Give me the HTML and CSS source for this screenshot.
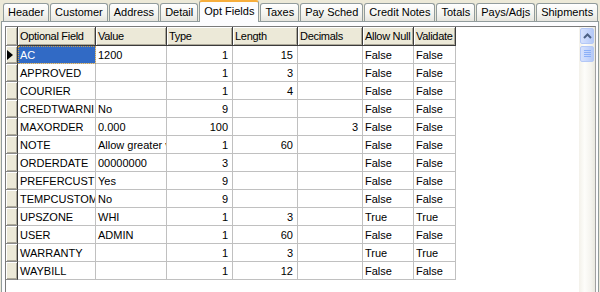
FILE: index.html
```html
<!DOCTYPE html>
<html lang="en">

<head>
    <meta charset="UTF-8">
    <title>Order Entry - Opt Fields</title>
    <link rel="stylesheet" href="styles.css">
</head>

<body>
    <div class="window">
        <div class="tabs">
            <div class="tab">Header</div>
            <div class="tab">Customer</div>
            <div class="tab">Address</div>
            <div class="tab">Detail</div>
            <div class="tab active">Opt Fields</div>
            <div class="tab">Taxes</div>
            <div class="tab">Pay Sched</div>
            <div class="tab">Credit Notes</div>
            <div class="tab">Totals</div>
            <div class="tab">Pays/Adjs</div>
            <div class="tab">Shipments</div>
        </div>
        <div class="panel">
            <div class="grid">
                <div class="grid-body">
                    <table class="data">
                        <colgroup>
                            <col class="c-ind">
                            <col class="c-field">
                            <col class="c-value">
                            <col class="c-type">
                            <col class="c-len">
                            <col class="c-dec">
                            <col class="c-null">
                            <col class="c-valid">
                        </colgroup>
                        <thead>
                            <tr>
                                <th class="ind"></th>
                                <th>Optional Field</th>
                                <th>Value</th>
                                <th>Type</th>
                                <th>Length</th>
                                <th>Decimals</th>
                                <th>Allow Null</th>
                                <th>Validate</th>
                            </tr>
                        </thead>
                        <tbody>
                            <tr>
                                <td class="ind"><svg width="6" height="10" viewBox="0 0 6 10"><polygon points="0,0 6,5 0,10" fill="#000"/></svg></td>
                                <td class="selected">AC</td>
                                <td>1200</td>
                                <td class="num">1</td>
                                <td class="num">15</td>
                                <td class="num"></td>
                                <td>False</td>
                                <td>False</td>
                            </tr>
                            <tr>
                                <td class="ind"></td>
                                <td>APPROVED</td>
                                <td></td>
                                <td class="num">1</td>
                                <td class="num">3</td>
                                <td class="num"></td>
                                <td>False</td>
                                <td>False</td>
                            </tr>
                            <tr>
                                <td class="ind"></td>
                                <td>COURIER</td>
                                <td></td>
                                <td class="num">1</td>
                                <td class="num">4</td>
                                <td class="num"></td>
                                <td>False</td>
                                <td>False</td>
                            </tr>
                            <tr>
                                <td class="ind"></td>
                                <td>CREDTWARNI</td>
                                <td>No</td>
                                <td class="num">9</td>
                                <td class="num"></td>
                                <td class="num"></td>
                                <td>False</td>
                                <td>False</td>
                            </tr>
                            <tr>
                                <td class="ind"></td>
                                <td>MAXORDER</td>
                                <td>0.000</td>
                                <td class="num">100</td>
                                <td class="num"></td>
                                <td class="num">3</td>
                                <td>False</td>
                                <td>False</td>
                            </tr>
                            <tr>
                                <td class="ind"></td>
                                <td>NOTE</td>
                                <td>Allow greater v</td>
                                <td class="num">1</td>
                                <td class="num">60</td>
                                <td class="num"></td>
                                <td>False</td>
                                <td>False</td>
                            </tr>
                            <tr>
                                <td class="ind"></td>
                                <td>ORDERDATE</td>
                                <td>00000000</td>
                                <td class="num">3</td>
                                <td class="num"></td>
                                <td class="num"></td>
                                <td>False</td>
                                <td>False</td>
                            </tr>
                            <tr>
                                <td class="ind"></td>
                                <td>PREFERCUST</td>
                                <td>Yes</td>
                                <td class="num">9</td>
                                <td class="num"></td>
                                <td class="num"></td>
                                <td>False</td>
                                <td>False</td>
                            </tr>
                            <tr>
                                <td class="ind"></td>
                                <td>TEMPCUSTOM</td>
                                <td>No</td>
                                <td class="num">9</td>
                                <td class="num"></td>
                                <td class="num"></td>
                                <td>False</td>
                                <td>False</td>
                            </tr>
                            <tr>
                                <td class="ind"></td>
                                <td>UPSZONE</td>
                                <td>WHI</td>
                                <td class="num">1</td>
                                <td class="num">3</td>
                                <td class="num"></td>
                                <td>True</td>
                                <td>True</td>
                            </tr>
                            <tr>
                                <td class="ind"></td>
                                <td>USER</td>
                                <td>ADMIN</td>
                                <td class="num">1</td>
                                <td class="num">60</td>
                                <td class="num"></td>
                                <td>False</td>
                                <td>False</td>
                            </tr>
                            <tr>
                                <td class="ind"></td>
                                <td>WARRANTY</td>
                                <td></td>
                                <td class="num">1</td>
                                <td class="num">3</td>
                                <td class="num"></td>
                                <td>True</td>
                                <td>True</td>
                            </tr>
                            <tr>
                                <td class="ind"></td>
                                <td>WAYBILL</td>
                                <td></td>
                                <td class="num">1</td>
                                <td class="num">12</td>
                                <td class="num"></td>
                                <td>False</td>
                                <td>False</td>
                            </tr>
                        </tbody>
                    </table>
                </div>
                <div class="vscroll">
                    <div class="sb-btn">
                        <svg width="9" height="6" viewBox="0 0 9 6"><polyline points="1,5 4.5,1.5 8,5" fill="none" stroke="#4D6185" stroke-width="2"/></svg>
                    </div>
                    <div class="sb-btn thumb">
                        <svg width="7" height="8" viewBox="0 0 7 8">
                            <line x1="0" y1="0.5" x2="7" y2="0.5" stroke="#8CB0F8"/>
                            <line x1="0" y1="2.5" x2="7" y2="2.5" stroke="#8CB0F8"/>
                            <line x1="0" y1="4.5" x2="7" y2="4.5" stroke="#8CB0F8"/>
                            <line x1="0" y1="6.5" x2="7" y2="6.5" stroke="#8CB0F8"/>
                        </svg>
                    </div>
                </div>
            </div>
        </div>
    </div>
</body>

</html>
```

FILE: styles.css
```css
body {
    margin: 0;
    width: 600px;
    height: 292px;
    overflow: hidden;
    background-color: #ECE9D8;
    font-family: "Liberation Sans", Arial, sans-serif;
    font-size: 11px;
    color: #000;
}

.window {
    margin-left: 1px;
    width: 598px;
}

/* tab strip */

.tabs {
    display: flex;
    align-items: flex-end;
    height: 21px;
    padding-left: 2px;
    position: relative;
    z-index: 1;
}

.tab {
    box-sizing: border-box;
    height: 18px;
    line-height: 16px;
    padding: 0 4px;
    margin-right: 1px;
    border: 1px solid #919B9C;
    border-bottom: none;
    border-radius: 3px 3px 0 0;
    background: linear-gradient(#FFFFFF, #F3F3EF 60%, #E6E5DE);
    white-space: nowrap;
}

.tab.active {
    height: 22px;
    line-height: 18px;
    margin-bottom: -1px;
    border-top: 2px solid #F7AE3C;
    background: #FCFCFE;
}

/* tab page */

.panel {
    box-sizing: border-box;
    height: 271px;
    padding: 4px 2px 0 3px;
    border: 1px solid #919B9C;
    border-bottom: none;
    background-color: #FCFCFE;
}

.grid {
    display: flex;
    height: 266px;
    border: 1px solid #7A7A7A;
    border-right-color: #A0A0A0;
    border-bottom: none;
    background-color: #fff;
    overflow: hidden;
}

.grid-body {
    flex: 1;
}

.data {
    table-layout: fixed;
    border-collapse: separate;
    border-spacing: 0;
    width: 450px;
}

.c-ind { width: 12px; }
.c-field { width: 78px; }
.c-value { width: 71px; }
.c-type { width: 66px; }
.c-len { width: 65px; }
.c-dec { width: 65px; }
.c-null { width: 51px; }
.c-valid { width: 42px; }

.data th,
.data td {
    box-sizing: border-box;
    padding: 0 2px;
    overflow: hidden;
    white-space: nowrap;
    text-align: left;
    font-weight: normal;
}

.data th {
    height: 19px;
    padding: 0 1px 0 2px;
    letter-spacing: -0.3px;
    background-color: #ECE9D8;
    border-right: 1px solid #3A3A3A;
    border-bottom: 1px solid #3A3A3A;
    box-shadow: inset 1px 1px #fff, inset -1px -1px #ACA899;
}

.data td {
    height: 18px;
    border-right: 1px solid #C0C0C0;
    border-bottom: 1px solid #C0C0C0;
}

.data td.num {
    text-align: right;
    padding-right: 4px;
}

.data .ind {
    padding: 0 0 0 1px;
    background-color: #ECE9D8;
    border-right: 1px solid #3A3A3A;
    border-bottom: 1px solid #8A8A8A;
    box-shadow: inset 1px 1px #fff, inset -1px -1px #ACA899;
}

.data .ind svg {
    display: block;
}

.data td.selected {
    background-color: #316AC5;
    color: #fff;
    outline: 1px dotted #C8A050;
    outline-offset: -1px;
}

/* scroll bar */

.vscroll {
    width: 16px;
    padding-top: 1px;
    background: linear-gradient(to right, #F3F1EA, #FDFDFA 35%, #F4F3EE 75%, #E9E8E0);
}

.sb-btn {
    box-sizing: border-box;
    display: flex;
    align-items: center;
    justify-content: center;
    width: 14px;
    height: 16px;
    margin: 0 0 2px 1px;
    border: 1px solid #B4C8F6;
    border-radius: 2px;
    background: linear-gradient(to right, #D7E2FD, #C3D4FC 60%, #B5C9F6);
}
```
